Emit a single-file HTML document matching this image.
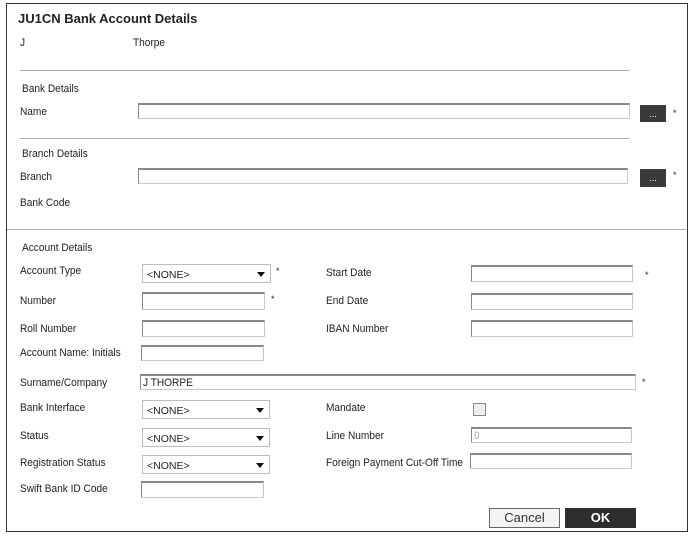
<!DOCTYPE html>
<html><head><meta charset="utf-8"><style>
body{margin:0;width:693px;height:537px;background:#fff;position:relative;overflow:hidden;font-family:"Liberation Sans",Arial,sans-serif;color:#222}
.frame{position:absolute;left:6px;top:3px;width:680px;height:527px;border:1px solid #333}
.t{position:absolute;font-size:11px;line-height:12px;white-space:nowrap;transform-origin:0 0;transform:scaleX(.92)}
.hr{position:absolute;height:0;border-top:1px solid #aaa}
.in{position:absolute;box-sizing:border-box;border:1px solid #c8c8c8;border-top:2px solid #888;border-left:1px solid #888;background:#fff}
.sel{position:absolute;box-sizing:border-box;border:1px solid #bbb;background:#fff;font-size:10.5px;padding:4px 0 0 4px;transform:none}
.sel:after{content:"";position:absolute;right:5px;top:7px;border:4px solid transparent;border-top:5px solid #111;border-bottom:0}
.btn{position:absolute;background:#3a3a3a;color:#fff;font-size:9px;text-align:center;line-height:18px}
.st{position:absolute;font-size:9px}
</style></head><body>
<div class="frame"></div>
<div class="t" style="left:18px;top:12px;font-size:13px;font-weight:bold;line-height:14px;transform:none">JU1CN Bank Account Details</div>
<div class="t" style="left:20px;top:37px">J</div>
<div class="t" style="left:133px;top:37px">Thorpe</div>
<div class="hr" style="left:20px;top:70px;width:609px"></div>
<div class="t" style="left:22px;top:83px">Bank Details</div>
<div class="t" style="left:20px;top:106px">Name</div>
<div class="in" style="left:138px;top:103px;width:492px;height:16px"></div>
<div class="btn" style="left:640px;top:105px;width:26px;height:17px">...</div>
<div class="st" style="left:673px;top:108px">*</div>
<div class="hr" style="left:20px;top:138px;width:609px"></div>
<div class="t" style="left:22px;top:148px">Branch Details</div>
<div class="t" style="left:20px;top:171px">Branch</div>
<div class="in" style="left:138px;top:168px;width:490px;height:16px"></div>
<div class="btn" style="left:640px;top:169px;width:26px;height:18px">...</div>
<div class="st" style="left:673px;top:170px">*</div>
<div class="t" style="left:20px;top:197px">Bank Code</div>
<div class="hr" style="left:7px;top:229px;width:679px"></div>
<div class="t" style="left:22px;top:242px">Account Details</div>

<div class="t" style="left:20px;top:265px">Account Type</div>
<div class="sel" style="left:142px;top:264px;width:129px;height:19px">&lt;NONE&gt;</div>
<div class="st" style="left:276px;top:266px">*</div>
<div class="t" style="left:326px;top:267px">Start Date</div>
<div class="in" style="left:471px;top:265px;width:162px;height:17px"></div>
<div class="st" style="left:645px;top:270px">*</div>

<div class="t" style="left:20px;top:295px">Number</div>
<div class="in" style="left:142px;top:292px;width:123px;height:18px"></div>
<div class="st" style="left:271px;top:294px">*</div>
<div class="t" style="left:326px;top:295px">End Date</div>
<div class="in" style="left:471px;top:293px;width:162px;height:17px"></div>

<div class="t" style="left:20px;top:323px">Roll Number</div>
<div class="in" style="left:142px;top:320px;width:123px;height:17px"></div>
<div class="t" style="left:326px;top:323px">IBAN Number</div>
<div class="in" style="left:471px;top:320px;width:162px;height:17px"></div>

<div class="t" style="left:20px;top:347px">Account Name: Initials</div>
<div class="in" style="left:141px;top:345px;width:123px;height:16px"></div>

<div class="t" style="left:20px;top:377px">Surname/Company</div>
<div class="in" style="left:140px;top:374px;width:496px;height:16px"></div>
<div class="t" style="left:143px;top:377px">J THORPE</div>
<div class="st" style="left:642px;top:377px">*</div>

<div class="t" style="left:20px;top:402px">Bank Interface</div>
<div class="sel" style="left:142px;top:400px;width:128px;height:19px">&lt;NONE&gt;</div>
<div class="t" style="left:326px;top:402px">Mandate</div>
<div style="position:absolute;left:473px;top:403px;width:11px;height:11px;border:1px solid #888;background:#eee"></div>

<div class="t" style="left:20px;top:430px">Status</div>
<div class="sel" style="left:142px;top:428px;width:128px;height:19px">&lt;NONE&gt;</div>
<div class="t" style="left:326px;top:430px">Line Number</div>
<div class="in" style="left:471px;top:427px;width:161px;height:16px"></div>
<div class="t" style="left:474px;top:430px;color:#aaa">0</div>

<div class="t" style="left:20px;top:457px">Registration Status</div>
<div class="sel" style="left:142px;top:455px;width:128px;height:19px">&lt;NONE&gt;</div>
<div class="t" style="left:326px;top:457px">Foreign Payment Cut-Off Time</div>
<div class="in" style="left:470px;top:453px;width:162px;height:16px"></div>

<div class="t" style="left:20px;top:483px">Swift Bank ID Code</div>
<div class="in" style="left:141px;top:481px;width:123px;height:17px"></div>

<div style="position:absolute;left:489px;top:508px;width:71px;height:20px;box-sizing:border-box;border:1px solid #666;background:#f4f4f4;font-size:13px;text-align:center;line-height:18px;color:#333">Cancel</div>
<div style="position:absolute;left:565px;top:508px;width:71px;height:20px;background:#2e2e2e;color:#fff;font-size:13px;font-weight:bold;text-align:center;line-height:20px">OK</div>
</body></html>
